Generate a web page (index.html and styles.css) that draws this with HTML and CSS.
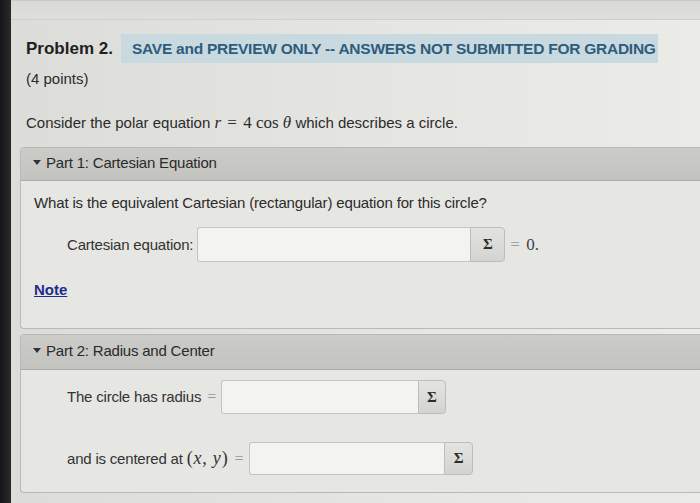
FILE: index.html
```html
<!DOCTYPE html>
<html>
<head>
<meta charset="utf-8">
<link rel="stylesheet" href="styles.css">
</head>
<body>
<div class="screen">
  <div class="bezel"></div>
  <main class="page">
    <div class="topbar"></div>
    <div class="problem-head">
      <span class="ptitle">Problem 2.</span>
      <span class="badge">SAVE and PREVIEW ONLY -- ANSWERS NOT SUBMITTED FOR GRADING</span>
    </div>
    <p class="points">(4 points)</p>
    <p class="intro">Consider the polar equation <span class="math"><i>r</i> <span class="op">=</span> 4 cos <i>θ</i></span> which describes a circle.</p>

    <section class="part part1">
      <div class="part-head"><span class="tri"></span>Part 1: Cartesian Equation</div>
      <div class="part-body">
        <p class="question">What is the equivalent Cartesian (rectangular) equation for this circle?</p>
        <div class="row row-cart">
          <span class="label">Cartesian equation:</span>
          <span class="answer w1"><span class="field"></span><span class="sigma">Σ</span></span>
          <span class="math tail"><span class="op">=</span> 0.</span>
        </div>
        <a class="note" href="#">Note</a>
      </div>
    </section>

    <section class="part part2">
      <div class="part-head"><span class="tri"></span>Part 2: Radius and Center</div>
      <div class="part-body">
        <div class="row row-rad">
          <span class="label">The circle has radius <span class="op light">=</span></span>
          <span class="answer w2"><span class="field"></span><span class="sigma">Σ</span></span>
        </div>
        <div class="row row-cen">
          <span class="label">and is centered at <span class="math pair">(<i>x</i>, <i>y</i>)</span> <span class="op light">=</span></span>
          <span class="answer w3"><span class="field"></span><span class="sigma">Σ</span></span>
        </div>
      </div>
    </section>
  </main>
</div>
</body>
</html>
```
FILE: styles.css
```css
* { box-sizing: border-box; }
html, body { margin: 0; padding: 0; }
body {
  width: 700px;
  height: 503px;
  overflow: hidden;
  background: #e2e2df;
  font-family: "Liberation Sans", Arial, sans-serif;
  color: #2b2b2b;
}
.screen {
  display: flex;
  height: 503px;
}
.bezel {
  width: 11px;
  flex: none;
  background: linear-gradient(to right, #161616, #2a2a2a);
}
.page {
  flex: 1;
  padding-left: 9px;
  background: linear-gradient(to right, #dcdcd9, #e6e6e3 60%, #ebebe8);
  overflow: hidden;
}
.topbar {
  height: 20px;
  border-bottom: 1px solid #cfcfcc;
  background: linear-gradient(#d8d8d5, #dfdfdc);
  margin-left: -9px;
  box-shadow: inset 0 8px 0 -7px #c9c9c6;
}
.problem-head {
  display: flex;
  align-items: center;
  margin-top: 14px;
  padding-left: 6px;
  gap: 8px;
}
.ptitle {
  font-weight: bold;
  font-size: 17px;
  color: #1f1f1f;
}
.badge {
  background: #c9d9e0;
  color: #2e5c7c;
  font-weight: bold;
  font-size: 15.5px;
  padding: 6px 4px 5px 11px;
  width: 537px;
  height: 29px;
  white-space: nowrap;
  letter-spacing: -0.25px;
}
.points {
  margin: 6px 0 0;
  padding-left: 6px;
  font-size: 15px;
  line-height: 20px;
}
.intro {
  margin: 24px 0 0;
  padding-left: 6px;
  font-size: 15px;
  line-height: 20px;
}
.math {
  font-family: "Liberation Serif", "Times New Roman", serif;
  font-size: 17px;
}
.op { margin: 0 2px; }
.op.light { color: #9a9a9a; font-family: "Liberation Serif", serif; font-size: 16px; }
.part {
  border: 1px solid #b9b9b6;
  border-right: none;
  border-radius: 4px 0 0 4px;
  margin-right: -10px;
  background: #e6e6e3;
}
.part1 { margin-top: 14px; }
.part2 { margin-top: 5px; }
.part-head {
  display: flex;
  align-items: center;
  height: 33px;
  padding-left: 12px;
  padding-bottom: 4px;
  background: linear-gradient(#cbcbc8, #c3c3c0);
  border-bottom: 1px solid #acaca9;
  font-size: 15px;
  letter-spacing: -0.2px;
  color: #2a2a2a;
}
.part2 .part-head { height: 35px; }
.tri {
  width: 0;
  height: 0;
  border-left: 4px solid transparent;
  border-right: 4px solid transparent;
  border-top: 5px solid #333;
  margin-right: 5px;
}
.part-body {
  padding: 12px 0 28px 13px;
}
.question {
  margin: 0;
  font-size: 15px;
  line-height: 20px;
  letter-spacing: -0.15px;
}
.row {
  display: flex;
  align-items: center;
  padding-left: 33px;
  font-size: 15px;
  color: #333;
}
.row-cart { margin-top: 14px; }
.label { margin-right: 4px; white-space: nowrap; letter-spacing: -0.2px; }
.answer {
  display: flex;
  height: 35px;
}
.field {
  flex: 1;
  background: #f3f3f1;
  border: 1px solid #c4c4c1;
  border-right: none;
  border-radius: 3px 0 0 3px;
}
.sigma {
  display: flex;
  align-items: center;
  justify-content: center;
  background: linear-gradient(#e3e3e0, #d3d3d0);
  border: 1px solid #bdbdba;
  border-radius: 0 4px 4px 0;
  font-family: "Liberation Serif", serif;
  font-weight: bold;
  font-size: 15px;
  color: #2c2c2c;
}
.w1 { width: 308px; }
.w1 .sigma { width: 35px; }
.w2 { width: 225px; height: 34px; }
.w2 .sigma { width: 28px; }
.w3 { width: 224px; height: 33px; }
.w3 .sigma { width: 29px; }
.tail { margin-left: 3px; color: #444; }
.tail .op { color: #9a9a9a; }
.note {
  display: inline-block;
  margin-top: 18px;
  color: #1f2d8a;
  font-weight: bold;
  font-size: 15px;
  line-height: 20px;
  text-decoration: underline;
}
.part2 .part-body { padding: 10px 0 17px 13px; }
.row-rad .label { margin-right: 3px; }
.row-cen { margin-top: 28px; }
.row-cen .label { margin-right: 4px; }
.pair { font-size: 18px; letter-spacing: 0.8px; }
```
